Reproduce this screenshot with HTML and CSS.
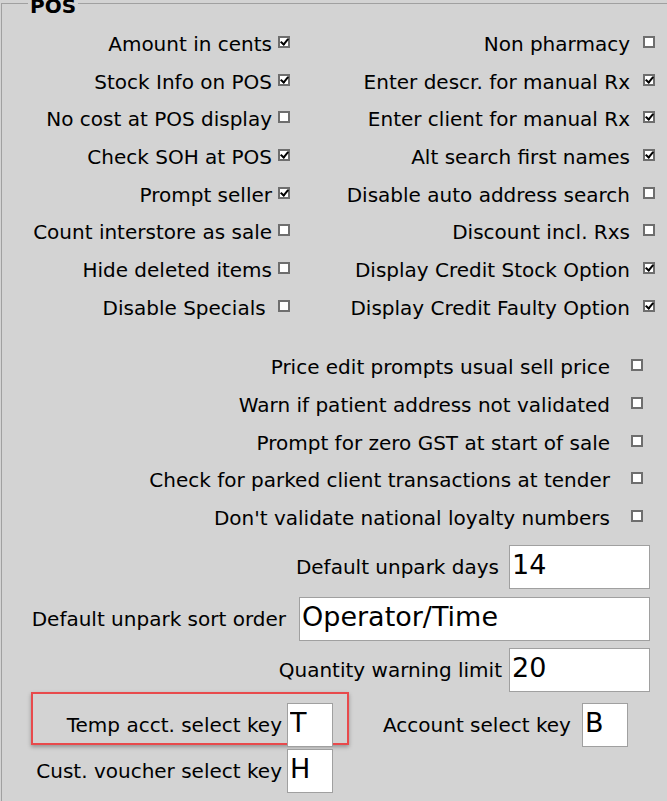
FILE: index.html
```html
<!DOCTYPE html>
<html>
  <head>
    <meta charset="utf-8" />
    <title>POS Settings</title>
    <meta name="viewport" content="width=device-width, initial-scale=1.0" />
    <link rel="stylesheet" href="styles.css">
  </head>
  <body>
    <fieldset class="posPanel">
      <legend class="posLegend">POS</legend>

      <div class="optionGrid">
        <label class="optionLabel" for="amountCents">Amount in cents</label>
        <span class="tickCell"><input type="checkbox" id="amountCents" class="tick" checked /></span>
        <label class="optionLabel" for="nonPharmacy">Non pharmacy</label>
        <span class="tickCellWide"><input type="checkbox" id="nonPharmacy" class="tick" /></span>

        <label class="optionLabel" for="stockInfo">Stock Info on POS</label>
        <span class="tickCell"><input type="checkbox" id="stockInfo" class="tick" checked /></span>
        <label class="optionLabel" for="descrManual">Enter descr. for manual Rx</label>
        <span class="tickCellWide"><input type="checkbox" id="descrManual" class="tick" checked /></span>

        <label class="optionLabel" for="noCost">No cost at POS display</label>
        <span class="tickCell"><input type="checkbox" id="noCost" class="tick" /></span>
        <label class="optionLabel" for="clientManual">Enter client for manual Rx</label>
        <span class="tickCellWide"><input type="checkbox" id="clientManual" class="tick" checked /></span>

        <label class="optionLabel" for="checkSoh">Check SOH at POS</label>
        <span class="tickCell"><input type="checkbox" id="checkSoh" class="tick" checked /></span>
        <label class="optionLabel" for="altSearch">Alt search first names</label>
        <span class="tickCellWide"><input type="checkbox" id="altSearch" class="tick" checked /></span>

        <label class="optionLabel" for="promptSeller">Prompt seller</label>
        <span class="tickCell"><input type="checkbox" id="promptSeller" class="tick" checked /></span>
        <label class="optionLabel" for="autoAddress">Disable auto address search</label>
        <span class="tickCellWide"><input type="checkbox" id="autoAddress" class="tick" /></span>

        <label class="optionLabel" for="interstore">Count interstore as sale</label>
        <span class="tickCell"><input type="checkbox" id="interstore" class="tick" /></span>
        <label class="optionLabel" for="discountRx">Discount incl. Rxs</label>
        <span class="tickCellWide"><input type="checkbox" id="discountRx" class="tick" /></span>

        <label class="optionLabel" for="hideDeleted">Hide deleted items</label>
        <span class="tickCell"><input type="checkbox" id="hideDeleted" class="tick" /></span>
        <label class="optionLabel" for="creditStock">Display Credit Stock Option</label>
        <span class="tickCellWide"><input type="checkbox" id="creditStock" class="tick" checked /></span>

        <label class="optionLabel" for="noSpecials">Disable Specials&nbsp;</label>
        <span class="tickCell"><input type="checkbox" id="noSpecials" class="tick" /></span>
        <label class="optionLabel" for="creditFaulty">Display Credit Faulty Option</label>
        <span class="tickCellWide"><input type="checkbox" id="creditFaulty" class="tick" checked /></span>
      </div>

      <div class="promptGrid">
        <label class="optionLabel" for="usualPrice">Price edit prompts usual sell price</label>
        <span class="promptCell"><input type="checkbox" id="usualPrice" class="tick" /></span>
        <label class="optionLabel" for="warnAddress">Warn if patient address not validated</label>
        <span class="promptCell"><input type="checkbox" id="warnAddress" class="tick" /></span>
        <label class="optionLabel" for="zeroGst">Prompt for zero GST at start of sale</label>
        <span class="promptCell"><input type="checkbox" id="zeroGst" class="tick" /></span>
        <label class="optionLabel" for="parkedTender">Check for parked client transactions at tender</label>
        <span class="promptCell"><input type="checkbox" id="parkedTender" class="tick" /></span>
        <label class="optionLabel" for="loyaltyNumbers">Don't validate national loyalty numbers</label>
        <span class="promptCell"><input type="checkbox" id="loyaltyNumbers" class="tick" /></span>
      </div>

      <div class="fieldRow unparkDays">
        <label class="fieldLabel" for="unparkDays">Default unpark days</label>
        <input type="text" id="unparkDays" class="textField numField" value="14" />
      </div>
      <div class="fieldRow unparkOrder">
        <label class="fieldLabel" for="unparkOrder">Default unpark sort order</label>
        <input type="text" id="unparkOrder" class="textField wideField" value="Operator/Time" />
      </div>
      <div class="fieldRow qtyLimit">
        <label class="fieldLabel" for="qtyLimit">Quantity warning limit</label>
        <input type="text" id="qtyLimit" class="textField numField" value="20" />
      </div>

      <div class="keyRow tempRow">
        <div class="highlight"></div>
        <label class="keyLabel" for="tempKey">Temp acct. select key</label>
        <input type="text" id="tempKey" class="textField keyField" value="T" maxlength="1" />
        <label class="fieldLabel accountLabel" for="accountKey">Account select key</label>
        <input type="text" id="accountKey" class="textField keyField" value="B" maxlength="1" />
      </div>
      <div class="keyRow voucherRow">
        <label class="keyLabel" for="voucherKey">Cust. voucher select key</label>
        <input type="text" id="voucherKey" class="textField keyField" value="H" maxlength="1" />
      </div>
    </fieldset>
  </body>
</html>
```

FILE: styles.css
```css
html,
body {
  overflow: hidden;
}
body {
  margin: 0;
  background-color: #d3d3d3;
  color: #000;
  font-family: "DejaVu Sans", Verdana, sans-serif;
  font-size: 20px;
}
.posPanel {
  width: 720px;
  height: 900px;
  margin: -12px 0 0 1px;
  padding: 0;
  border: 1px solid #a0a0a0;
  box-sizing: border-box;
}
.posLegend {
  margin-left: 26px;
  padding: 6px 2px 0;
  font-weight: bold;
  font-size: 20px;
}
.optionGrid {
  display: grid;
  grid-template-columns: 270px 28px 330px 37px;
  grid-auto-rows: 37.7px;
  align-items: center;
  margin-top: 7px;
}
.optionLabel {
  text-align: right;
  white-space: nowrap;
}
.tickCell,
.tickCellWide,
.promptCell {
  display: flex;
  align-items: center;
  height: 100%;
}
.tickCell {
  padding-left: 6px;
}
.tickCellWide {
  padding-left: 13px;
}
.promptCell {
  padding-left: 21px;
}
.tick {
  appearance: none;
  -webkit-appearance: none;
  position: relative;
  width: 12px;
  height: 12px;
  margin: 0 0 4px 0;
  border: 2px solid #6e6e6e;
  background: #fff;
  box-sizing: border-box;
}
.tick:checked::after {
  content: "";
  position: absolute;
  left: 2px;
  top: -1px;
  width: 3px;
  height: 6px;
  border: solid #000;
  border-width: 0 2px 2px 0;
  transform: rotate(40deg);
}
.promptGrid {
  display: grid;
  grid-template-columns: 608px 40px;
  grid-auto-rows: 37.7px;
  align-items: center;
  margin-top: 22px;
}
.fieldRow {
  display: flex;
  align-items: baseline;
  justify-content: flex-end;
  width: 648px;
}
.fieldLabel,
.keyLabel {
  white-space: nowrap;
}
.unparkDays {
  margin-top: 8px;
}
.unparkDays .fieldLabel {
  margin-right: 10px;
}
.unparkOrder {
  margin-top: 8px;
}
.unparkOrder .fieldLabel {
  margin-right: 13px;
}
.qtyLimit {
  margin-top: 7px;
}
.qtyLimit .fieldLabel {
  margin-right: 7px;
}
.textField {
  position: relative;
  height: 44px;
  margin: 0;
  padding: 3px 2px 7px;
  border: 1px solid #a0a0a0;
  border-radius: 0;
  background: #fff;
  box-sizing: border-box;
  font-family: "DejaVu Sans", Verdana, sans-serif;
  font-size: 27px;
  line-height: 32px;
  color: #000;
  outline: none;
}
.numField {
  width: 141px;
}
.wideField {
  width: 351px;
}
.keyField {
  width: 46px;
}
.keyRow {
  position: relative;
  display: flex;
  align-items: baseline;
}
.keyLabel {
  width: 280px;
  margin-right: 5px;
  text-align: right;
}
.accountLabel {
  margin-left: 50px;
  margin-right: 11px;
}
.tempRow {
  margin-top: 11px;
}
.voucherRow {
  margin-top: 2px;
}
.highlight {
  position: absolute;
  left: 29px;
  top: -11px;
  width: 318px;
  height: 53px;
  border: 2px solid #e84a4c;
  box-sizing: border-box;
  box-shadow: 0 2px 4px rgba(0, 0, 0, 0.3);
}
```
